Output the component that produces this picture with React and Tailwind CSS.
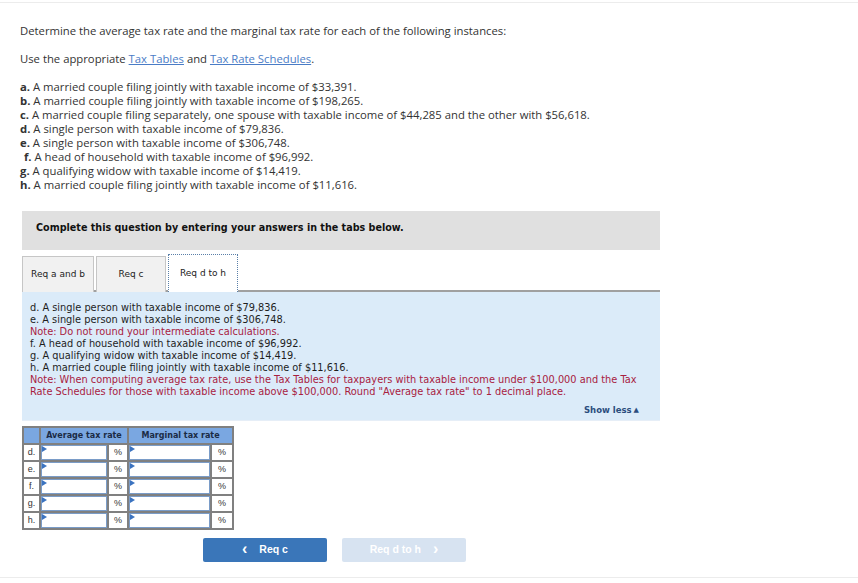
import React from 'react';

const items = [
  ['a.', 'A married couple filing jointly with taxable income of $33,391.'],
  ['b.', 'A married couple filing jointly with taxable income of $198,265.'],
  ['c.', 'A married couple filing separately, one spouse with taxable income of $44,285 and the other with $56,618.'],
  ['d.', 'A single person with taxable income of $79,836.'],
  ['e.', 'A single person with taxable income of $306,748.'],
  ['f.', 'A head of household with taxable income of $96,992.'],
  ['g.', 'A qualifying widow with taxable income of $14,419.'],
  ['h.', 'A married couple filing jointly with taxable income of $11,616.'],
];

const rows = ['d.', 'e.', 'f.', 'g.', 'h.'];

function AnswerInput() {
  return (
    <div className="relative h-[15px] border border-[#7a9cc8] bg-white">
      <span className="absolute left-0 top-0 w-0 h-0 border-t-[3px] border-b-[3px] border-l-[5px] border-t-transparent border-b-transparent border-l-[#3b73c0]" />
    </div>
  );
}

export default function App() {
  return (
    <div className="w-[858px] h-[583px] bg-white text-[#333] font-['Open_Sans',sans-serif]">
      <div className="pt-[2px]">
        <div className="border-t border-[#ececec]" />
      </div>

      <div className="pl-5 pt-[21px] text-[11.3px] leading-[14px]">
        <p>Determine the average tax rate and the marginal tax rate for each of the following instances:</p>
        <p className="mt-[14px]">
          Use the appropriate <span className="text-[#4a7cc6] underline">Tax Tables</span> and{' '}
          <span className="text-[#4a7cc6] underline">Tax Rate Schedules</span>.
        </p>
        <div className="mt-[14px]">
          {items.map(([k, t]) => (
            <p key={k} className={k === 'f.' ? 'pl-[4px]' : ''}>
              <span className="font-bold">{k}</span> {t}
            </p>
          ))}
        </div>
      </div>

      <div className="ml-[22px] w-[638px] font-['DejaVu_Sans',Verdana,sans-serif]">
        <div className="mt-[19px] h-[39px] bg-[#e0e0e0] pl-[14px] pt-[11px]">
          <p className="font-bold text-[9.6px] leading-[12px] text-[#111]">Complete this question by entering your answers in the tabs below.</p>
        </div>

        <div className="mt-[5px] flex items-end gap-[2px] h-[37px] border-b-2 border-[#a0a0a0] text-[9px] text-[#222]">
          <div className="w-[72px] h-[36px] -mb-[2px] bg-[#f1f1f1] border border-[#c6c6c6] border-b-0 flex items-center justify-center">Req a and b</div>
          <div className="w-[70px] h-[36px] -mb-[2px] bg-[#f1f1f1] border border-[#c6c6c6] border-b-0 flex items-center justify-center">Req c</div>
          <div className="w-[70px] h-[38px] -mb-[2px] bg-white border border-dotted border-[#5a7fa8] border-b-0 flex items-center justify-center">Req d to h</div>
        </div>

        <div className="h-[128px] bg-[#dbebf9] pl-[8px] pt-[10px] pr-[21px] text-[9.8px] leading-[12px] text-[#1e1e1e]">
          <p>d. A single person with taxable income of $79,836.</p>
          <p>e. A single person with taxable income of $306,748.</p>
          <p className="text-[#a8213f]">Note: Do not round your intermediate calculations.</p>
          <p>f. A head of household with taxable income of $96,992.</p>
          <p>g. A qualifying widow with taxable income of $14,419.</p>
          <p>h. A married couple filing jointly with taxable income of $11,616.</p>
          <p className="text-[#a8213f]">
            Note: When computing average tax rate, use the Tax Tables for taxpayers with taxable income under $100,000 and the Tax Rate Schedules for those with taxable income above $100,000. Round "Average tax rate" to 1 decimal place.
          </p>
          <div className="mt-[6px] flex justify-end items-center gap-[2px] text-[8.5px] font-bold text-[#2b4d7e]">
            <span>Show less</span>
            <span className="text-[7px]">▲</span>
          </div>
        </div>
        <div className="h-[1px] bg-[#e6eef7]" />

        <table className="mt-[5px] w-[210px] table-fixed border-collapse text-[9px] font-['Liberation_Sans',Arial,sans-serif]">
          <colgroup>
            <col className="w-[17px]" />
            <col className="w-[68px]" />
            <col className="w-[20px]" />
            <col className="w-[83px]" />
            <col className="w-[22px]" />
          </colgroup>
          <thead>
            <tr className="h-[17px] bg-[#7aa7e1] text-[#1b2b45]">
              <th className="border-2 border-[#808080]" />
              <th colSpan={2} className="border-2 border-[#808080] font-bold text-[8px] leading-[13px] whitespace-nowrap font-['DejaVu_Sans',Verdana,sans-serif]">Average tax rate</th>
              <th colSpan={2} className="border-2 border-[#808080] font-bold text-[8px] leading-[13px] whitespace-nowrap font-['DejaVu_Sans',Verdana,sans-serif]">Marginal tax rate</th>
            </tr>
          </thead>
          <tbody>
            {rows.map((r) => (
              <tr key={r} className="h-[17px]">
                <td className="border-2 border-[#808080] text-center text-[#333] leading-[13px]">{r}</td>
                <td className="p-0 border-2 border-[#808080]"><AnswerInput /></td>
                <td className="border-2 border-[#808080] text-center text-[#333] leading-[13px]">%</td>
                <td className="p-0 border-2 border-[#808080]"><AnswerInput /></td>
                <td className="border-2 border-[#808080] text-center text-[#333] leading-[13px]">%</td>
              </tr>
            ))}
          </tbody>
        </table>
      </div>

      <div className="mt-[8px] pl-[203px] flex gap-[15px] font-['Liberation_Sans',Arial,sans-serif] text-[10.5px] font-bold">
        <div className="w-[124px] h-[24px] bg-[#3a76b9] rounded-[2px] text-white flex items-center justify-center gap-[12px]">
          <span className="text-[16px] leading-[16px] font-bold -mt-[2px]">‹</span>
          <span>Req c</span>
        </div>
        <div className="w-[124px] h-[24px] bg-[#d7e3f1] rounded-[2px] text-white flex items-center justify-center gap-[12px]">
          <span>Req d to h</span>
          <span className="text-[16px] leading-[16px] font-bold -mt-[2px]">›</span>
        </div>
      </div>

      <div className="mt-[15px] border-t border-[#ececec]" />
    </div>
  );
}
